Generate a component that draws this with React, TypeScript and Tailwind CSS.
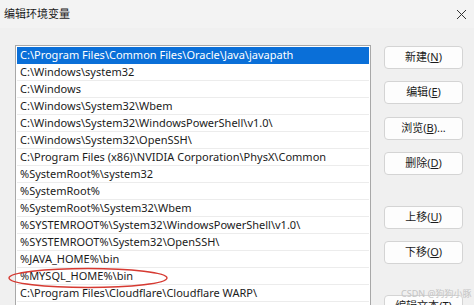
import React from 'react';

const paths = [
  'C:\\Program Files\\Common Files\\Oracle\\Java\\javapath',
  'C:\\Windows\\system32',
  'C:\\Windows',
  'C:\\Windows\\System32\\Wbem',
  'C:\\Windows\\System32\\WindowsPowerShell\\v1.0\\',
  'C:\\Windows\\System32\\OpenSSH\\',
  'C:\\Program Files (x86)\\NVIDIA Corporation\\PhysX\\Common',
  '%SystemRoot%\\system32',
  '%SystemRoot%',
  '%SystemRoot%\\System32\\Wbem',
  '%SYSTEMROOT%\\System32\\WindowsPowerShell\\v1.0\\',
  '%SYSTEMROOT%\\System32\\OpenSSH\\',
  '%JAVA_HOME%\\bin',
  '%MYSQL_HOME%\\bin',
  'C:\\Program Files\\Cloudflare\\Cloudflare WARP\\',
];

interface DialogButtonProps {
  label: string;
  hotkey: string;
  suffix?: string;
  className?: string;
}

const DialogButton: React.FC<DialogButtonProps> = ({ label, hotkey, suffix = '', className = '' }) => (
  <div
    className={`h-[23px] w-[79px] shrink-0 flex items-center justify-center rounded-[4px] border border-[#d4d4d4] bg-[#fdfdfd] text-[11px] text-[#1b1b1b] ${className}`}
  >
    {label}(<span className="underline underline-offset-1">{hotkey}</span>){suffix}
  </div>
);

export default function App() {
  return (
    <div className="relative w-[474px] h-[305px] overflow-hidden bg-[#f0f0f0] font-['Noto_Sans','Noto_Sans_CJK_SC',sans-serif]">
      {/* Title bar */}
      <div className="h-[28px] flex items-center justify-between pl-[4px] pr-[7px] bg-[#f3f3f3]">
        <span className="text-[11px] text-[#1b1b1b]">编辑环境变量</span>
        <svg width="11" height="11" viewBox="0 0 11 11" className="text-[#333]">
          <path d="M1 1 L10 10 M10 1 L1 10" stroke="currentColor" strokeWidth="1" fill="none" />
        </svg>
      </div>

      <div className="flex pl-[15px] pt-[17px]">
        {/* Path list */}
        <div className="w-[356px] h-[300px] shrink-0 border border-[#a8a8a8] bg-white p-[1px]">
          {paths.map((p, i) => (
            <div
              key={p}
              className={`h-[17px] flex items-center pl-[3px] text-[11px] whitespace-nowrap border-b ${
                i === 0 ? 'bg-[#0a6fd8] text-white border-[#0a6fd8]' : 'text-[#1b1b1b] border-[#ececec]'
              }`}
            >
              {p}
            </div>
          ))}
        </div>

        {/* Buttons */}
        <div className="flex flex-col ml-[13px] pt-[1px]">
          <DialogButton label="新建" hotkey="N" />
          <DialogButton label="编辑" hotkey="E" className="mt-[12px]" />
          <DialogButton label="浏览" hotkey="B" suffix="..." className="mt-[13px]" />
          <DialogButton label="删除" hotkey="D" className="mt-[12px]" />
          <DialogButton label="上移" hotkey="U" className="mt-[31px]" />
          <DialogButton label="下移" hotkey="O" className="mt-[12px]" />
          <DialogButton label="编辑文本" hotkey="T" className="mt-[31px]" />
        </div>
      </div>

      {/* Red annotation ellipse */}
      <svg className="absolute left-[6px] top-[266px]" width="164" height="24" viewBox="0 0 164 24">
        <ellipse cx="82" cy="12" rx="79" ry="9.5" stroke="#d63a32" strokeWidth="1.4" fill="none" />
      </svg>

      {/* Watermark */}
      <span className="absolute left-[401px] top-[287px] text-[9px] text-[#c4c4c4] whitespace-nowrap">
        CSDN @狗狗小豚
      </span>
    </div>
  );
}
